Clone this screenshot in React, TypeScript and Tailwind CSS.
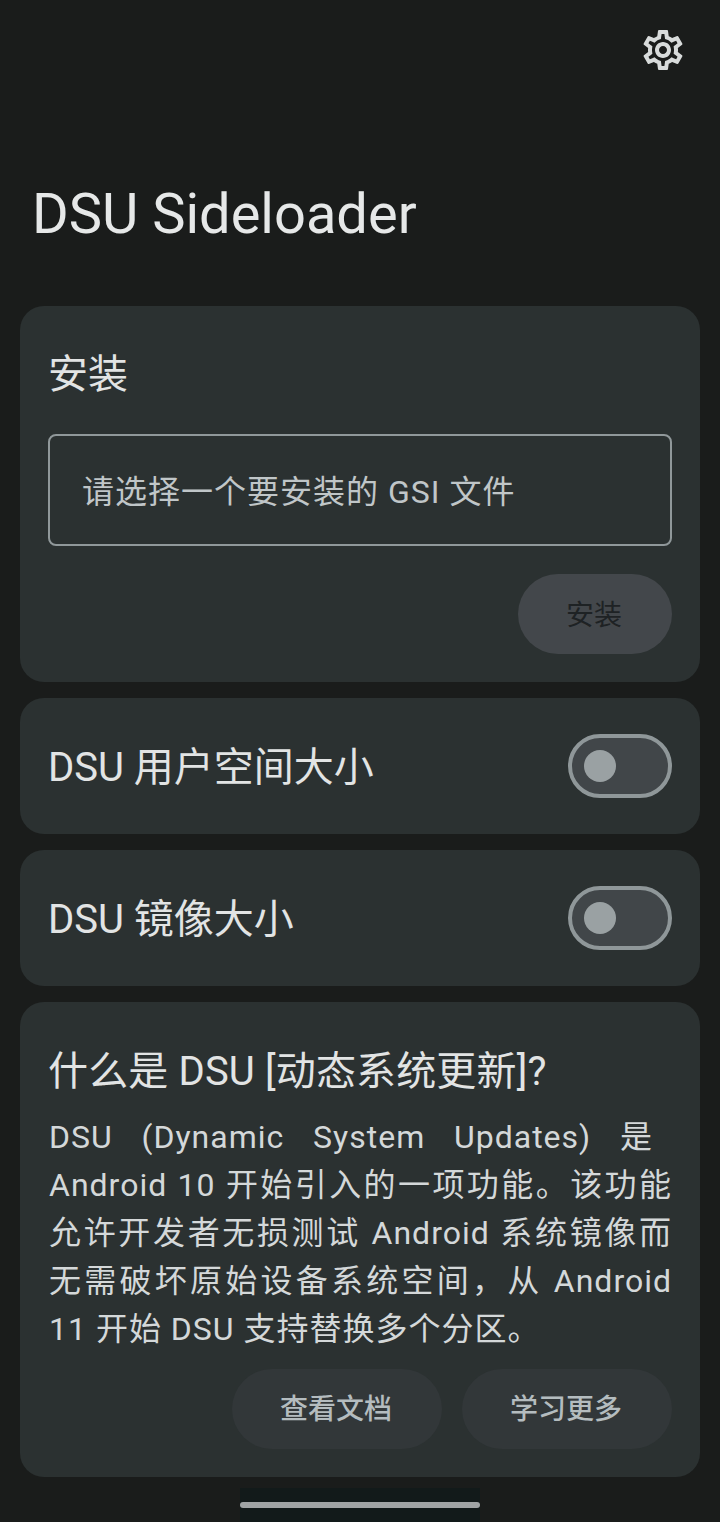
import { MdOutlineSettings } from 'react-icons/md';

const font = { fontFamily: 'Roboto, "Noto Sans CJK SC", sans-serif' };

const aboutRest = ' Android 10 开始引入的一项功能。该功能允许开发者无损测试 Android 系统镜像而无需破坏原始设备系统空间\uFF0C从 Android 11 开始 DSU 支持替换多个分区。';

function Toggle() {
  return (
    <div className="flex items-center w-[104px] h-[64px] rounded-full border-[4px] border-[#8f9799] bg-[#414649] pl-[12px]">
      <div className="w-[32px] h-[32px] rounded-full bg-[#9aa1a3]" />
    </div>
  );
}

function SizeRow({ label }: { label: string }) {
  return (
    <div className="flex items-center justify-between h-[136px] rounded-[24px] bg-[#2b3131] pl-[28px] pr-[28px]">
      <span className="pt-[4px] text-[40px] leading-[48px] text-[#e2e4e4]">{label}</span>
      <Toggle />
    </div>
  );
}

export default function App() {
  return (
    <div className="relative h-[1522px] w-[720px] overflow-hidden bg-[#1a1c1b]" style={font}>
      {/* Top bar */}
      <div className="flex justify-end h-[100px] pt-[26px] pr-[33px]">
        <MdOutlineSettings size={48} className="text-[#d8dbdb]" />
      </div>

      {/* Title */}
      <h1 className="pl-[32px] mt-[76px] text-[56px] leading-[76px] text-[#e6e8e8]">DSU Sideloader</h1>

      <div className="flex flex-col gap-4 mt-[54px] px-[20px]">
        {/* Install */}
        <div className="h-[376px] rounded-[24px] bg-[#2b3131] px-[28px] pt-[44px]">
          <h2 className="text-[40px] leading-[50px] text-[#e2e4e4]">安装</h2>
          <div className="flex items-center h-[112px] mt-[34px] rounded-[8px] border-2 border-[#90989a] pl-[32px] pt-[4px] text-[32px] tracking-[1px] text-[#c0c6c8]">
            请选择一个要安装的 GSI 文件
          </div>
          <div className="flex justify-end mt-[28px]">
            <button className="w-[154px] h-[80px] rounded-full bg-[#43474b] pt-[4px] pr-[2px] text-[28px] text-[#1e2224]">安装</button>
          </div>
        </div>

        <SizeRow label="DSU 用户空间大小" />
        <SizeRow label="DSU 镜像大小" />

        {/* About */}
        <div className="h-[475px] rounded-[24px] bg-[#2b3131] pl-[29px] pr-[28px] pt-[46px]">
          <h2 className="-ml-px text-[40px] leading-[48px] tracking-[0.15px] text-[#e2e4e4]">什么是 DSU [动态系统更新]?</h2>
          <p className="mt-[17px] text-[32px] leading-[48px] tracking-[1px] text-justify text-[#d4d8d9]">
            DSU (Dynamic System Updates) <span className="pr-[19px]">是</span>{aboutRest}
          </p>
          <div className="flex justify-end gap-[20px] mt-[16px]">
            <button className="w-[210px] h-[80px] rounded-full bg-[#323739] pt-[2px] pr-[2px] text-[28px] font-medium text-[#b4bcbf]">查看文档</button>
            <button className="w-[210px] h-[80px] rounded-full bg-[#323739] pt-[2px] pr-[2px] text-[28px] font-medium text-[#b4bcbf]">学习更多</button>
          </div>
        </div>
      </div>

      {/* Gesture bar */}
      <div className="absolute left-[240px] bottom-0 flex w-[240px] h-[34px] items-start bg-[#121a1a] pt-[14px]">
        <div className="w-full h-[6px] rounded-full bg-[#a0a4a5]" />
      </div>
    </div>
  );
}
